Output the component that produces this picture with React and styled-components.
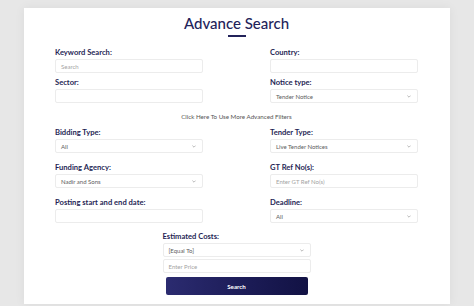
import React from "react";
import styled, { createGlobalStyle } from "styled-components";

const Global = createGlobalStyle`
  html, body { margin: 0; padding: 0; }
  body {
    background: #e7e7e7;
    font-family: Lato, "Open Sans", sans-serif;
    width: 474px;
    height: 306px;
    overflow: hidden;
  }
  #root { padding: 8px 24px 0 24px; }
`;

const Card = styled.div`
  background: #fff;
  width: 426px;
  height: 296px;
  box-sizing: border-box;
  padding: 7px 32px 0 31px;
  box-shadow: 0 0 10px rgba(0, 0, 0, 0.06);
  display: flex;
  flex-direction: column;
`;

const Title = styled.h1`
  margin: 0;
  text-align: center;
  font-size: 15px;
  line-height: 17px;
  font-weight: 500;
  color: #23235a;
`;

const Underline = styled.div`
  width: 18px;
  height: 2px;
  background: #23235a;
  margin: 3px auto 10px;
`;

const Grid = styled.div`
  display: grid;
  grid-template-columns: 148px 148px;
  justify-content: space-between;
  row-gap: ${(p) => p.$gap}px;
`;

const Field = styled.div`
  display: flex;
  flex-direction: column;
  width: 148px;
`;

const Label = styled.label`
  font-size: 7.6px;
  line-height: 10px;
  font-weight: 700;
  color: #1f1f55;
  margin-bottom: 2px;
`;

const Control = styled.div`
  position: relative;
  height: 14px;
  box-sizing: border-box;
  border: 1px solid #ececec;
  border-radius: 2px;
  background: #fff;
  display: flex;
  align-items: center;
  padding: 0 5px;
  font-size: 6px;
  color: ${(p) => (p.$placeholder ? "#a3a3a3" : "#5c5c5c")};
`;

const Chevron = styled.svg`
  position: absolute;
  right: 6px;
  top: 5px;
  width: 4px;
  height: 3px;
`;

const MoreLink = styled.div`
  text-align: center;
  font-size: 6.2px;
  line-height: 9px;
  color: #555;
  margin: 9px 0 6px;
`;

const Center = styled.div`
  width: 148px;
  margin: 8px auto 0;
  display: flex;
  flex-direction: column;
`;

const Stack = styled.div`
  display: flex;
  flex-direction: column;
  gap: ${(p) => p.$gap}px;
`;

const Button = styled.button`
  margin: 4px 3px 0;
  height: 18px;
  border: none;
  border-radius: 2px;
  background: linear-gradient(90deg, #2b2b70 0%, #1b1b55 60%, #121244 100%);
  color: #fff;
  font-family: Lato, sans-serif;
  font-weight: 700;
  font-size: 6.2px;
  padding: 0;
`;

const ChevronIcon = () => (
  <Chevron viewBox="0 0 4 3">
    <path d="M0.4 0.6 L2 2.2 L3.6 0.6" fill="none" stroke="#8a8a8a" strokeWidth="0.6" />
  </Chevron>
);

const Input = ({ children, placeholder }) => (
  <Control $placeholder={!!placeholder}>{placeholder || children}</Control>
);

const Select = ({ children }) => (
  <Control>
    {children}
    <ChevronIcon />
  </Control>
);

export default function App() {
  return (
    <>
      <Global />
      <Card>
        <Title>Advance Search</Title>
        <Underline />
        <Grid $gap={4}>
          <Field>
            <Label>Keyword Search:</Label>
            <Input placeholder="Search" />
          </Field>
          <Field>
            <Label>Country:</Label>
            <Input />
          </Field>
          <Field>
            <Label>Sector:</Label>
            <Input />
          </Field>
          <Field>
            <Label>Notice type:</Label>
            <Select>Tender Notice</Select>
          </Field>
        </Grid>
        <MoreLink>Click Here To Use More Advanced Filters</MoreLink>
        <Grid $gap={9}>
          <Field>
            <Label>Bidding Type:</Label>
            <Select>All</Select>
          </Field>
          <Field>
            <Label>Tender Type:</Label>
            <Select>Live Tender Notices</Select>
          </Field>
          <Field>
            <Label>Funding Agency:</Label>
            <Select>Nadir and Sons</Select>
          </Field>
          <Field>
            <Label>GT Ref No(s):</Label>
            <Input placeholder="Enter GT Ref No(s)" />
          </Field>
          <Field>
            <Label>Posting start and end date:</Label>
            <Input />
          </Field>
          <Field>
            <Label>Deadline:</Label>
            <Select>All</Select>
          </Field>
        </Grid>
        <Center>
          <Label>Estimated Costs:</Label>
          <Stack $gap={2}>
            <Select>[Equal To]</Select>
            <Input placeholder="Enter Price" />
          </Stack>
          <Button>Search</Button>
        </Center>
      </Card>
    </>
  );
}
